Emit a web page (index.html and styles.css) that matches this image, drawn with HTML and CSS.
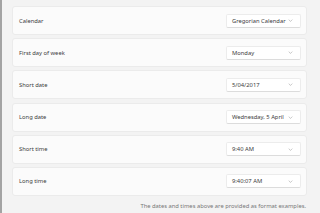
FILE: index.html
```html
<!DOCTYPE html>
<html lang="en">
  <head>
    <meta charset="UTF-8">
    <title>Regional format</title>
    <link rel="stylesheet" href="styles.css">
  </head>
  <body>
    <main class="settings">
      <div class="row">
        <span class="label">Calendar</span>
        <div class="select"><span>Gregorian Calendar</span><svg class="chev" viewBox="0 0 8 5"><path d="M1 1l3 3 3-3"/></svg></div>
      </div>
      <div class="row">
        <span class="label">First day of week</span>
        <div class="select"><span>Monday</span><svg class="chev" viewBox="0 0 8 5"><path d="M1 1l3 3 3-3"/></svg></div>
      </div>
      <div class="row">
        <span class="label">Short date</span>
        <div class="select"><span>5/04/2017</span><svg class="chev" viewBox="0 0 8 5"><path d="M1 1l3 3 3-3"/></svg></div>
      </div>
      <div class="row">
        <span class="label">Long date</span>
        <div class="select"><span>Wednesday, 5 April</span><svg class="chev" viewBox="0 0 8 5"><path d="M1 1l3 3 3-3"/></svg></div>
      </div>
      <div class="row">
        <span class="label">Short time</span>
        <div class="select"><span>9:40 AM</span><svg class="chev" viewBox="0 0 8 5"><path d="M1 1l3 3 3-3"/></svg></div>
      </div>
      <div class="row">
        <span class="label">Long time</span>
        <div class="select"><span>9:40:07 AM</span><svg class="chev" viewBox="0 0 8 5"><path d="M1 1l3 3 3-3"/></svg></div>
      </div>
      <p class="note">The dates and times above are provided as format examples.</p>
    </main>
  </body>
</html>
```

FILE: styles.css
```css
html {
  box-sizing: border-box;
  font-family: "Noto Sans", "Open Sans", sans-serif;
}

*,
*:before,
*:after {
  box-sizing: inherit;
}

body {
  background: #f3f3f3;
  border-left: 2px solid #a3a3a3;
  margin: 0;
  min-height: 100vh;
}

.settings {
  display: flex;
  flex-direction: column;
  gap: 3.2px;
  padding: 6px 13px 0 10px;
}

.row {
  align-items: center;
  background: #fbfbfb;
  border: 1px solid #ebebeb;
  border-radius: 3px;
  display: flex;
  height: 29px;
  justify-content: space-between;
  padding: 0 5px 0 6px;
}

.label {
  color: #3c3c3c;
  font-size: 5.8px;
}

.select {
  align-items: center;
  background: #fff;
  border: 1px solid #ececec;
  border-bottom-color: #dcdcdc;
  border-radius: 2px;
  color: #3c3c3c;
  display: flex;
  font-size: 5.8px;
  height: 14px;
  justify-content: space-between;
  padding: 0 7px 0 5px;
  width: 75px;
}

.chev {
  fill: none;
  height: 3px;
  stroke: #999;
  stroke-width: 0.9;
  width: 5px;
}

.note {
  color: #777;
  font-size: 5.8px;
  margin: 3px 1px 0 0;
  text-align: right;
}
```
